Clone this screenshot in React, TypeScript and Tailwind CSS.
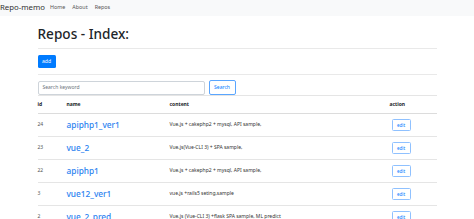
import React from "react";

const rows = [
  { id: "24", name: "apiphp1_ver1", content: "Vue.js + cakephp2 + mysql, API sample," },
  { id: "23", name: "vue_2", content: "Vue.js(Vue-CLI 3) + SPA sample," },
  { id: "22", name: "apiphp1", content: "Vue.js + cakephp2 + mysql, API sample," },
  { id: "3", name: "vue12_ver1", content: "vue.js +rails5 seting,sample" },
  { id: "2", name: "vue_2_pred", content: "Vue.js (Vue-CLI 3) +flask SPA sample, ML predict" },
];

export default function App() {
  return (
    <div
      className="w-[474px] h-[219px] overflow-hidden bg-white text-[#212529]"
      style={{ fontFamily: '"Noto Sans", "Open Sans", sans-serif' }}
    >
      <nav className="h-[16px] bg-[#f8f9fa] flex items-center">
        <span className="text-[7.8px] text-[#333] leading-none">Repo-memo</span>
        <div className="flex items-center gap-[7px] ml-[5px] text-[5.4px] text-[#555] leading-none">
          <span>Home</span>
          <span>About</span>
          <span>Repos</span>
        </div>
      </nav>
      <div className="w-[399px] mx-auto">
        <h1 className="text-[13.6px] font-medium leading-none mt-[11px] h-[19px] flex items-end pb-[5px]">
          Repos - Index:
        </h1>
        <div className="h-px bg-[#e9e9e9] mt-[2px]" />
        <div className="mt-[6px] h-[13px] w-[18px] bg-[#007bff] rounded-[1.5px] text-white text-[5px] flex items-center justify-center">
          add
        </div>
        <div className="h-px bg-[#e9e9e9] mt-[6px]" />
        <div className="flex mt-[5px] gap-[4px] items-center">
          <div className="w-[167px] h-[14px] border border-[#ced4da] rounded-[2px] text-[5px] text-[#6c757d] flex items-center pl-[4px]">
            Search keyword
          </div>
          <div className="w-[27px] h-[15px] border border-[#5aa6ff] rounded-[2px] text-[5px] text-[#007bff] flex items-center justify-center">
            Search
          </div>
        </div>
        <div className="border-t border-[#e5e5e5]">
          <div className="h-[18px] flex items-center text-[5px] font-bold border-b border-[#dcdcdc]">
            <div className="w-[29px]">id</div>
            <div className="w-[103px]">name</div>
            <div className="w-[220px]">content</div>
            <div className="flex-1">action</div>
          </div>
          {rows.map((r) => (
            <div key={r.id} className="h-[23px] flex items-center border-b border-[#e5e5e5]">
              <div className="w-[29px] text-[5px] text-[#555]">{r.id}</div>
              <div className="w-[103px] text-[8.3px] text-[#2b82f0] font-medium leading-none">{r.name}</div>
              <div className="w-[220px] text-[5px] text-[#333]">{r.content}</div>
              <div className="flex-1 flex">
                <div className="ml-[2px] w-[19px] h-[12px] border border-[#8fc1ff] rounded-[1.5px] text-[4.5px] text-[#007bff] flex items-center justify-center">
                  edit
                </div>
              </div>
            </div>
          ))}
        </div>
      </div>
    </div>
  );
}
